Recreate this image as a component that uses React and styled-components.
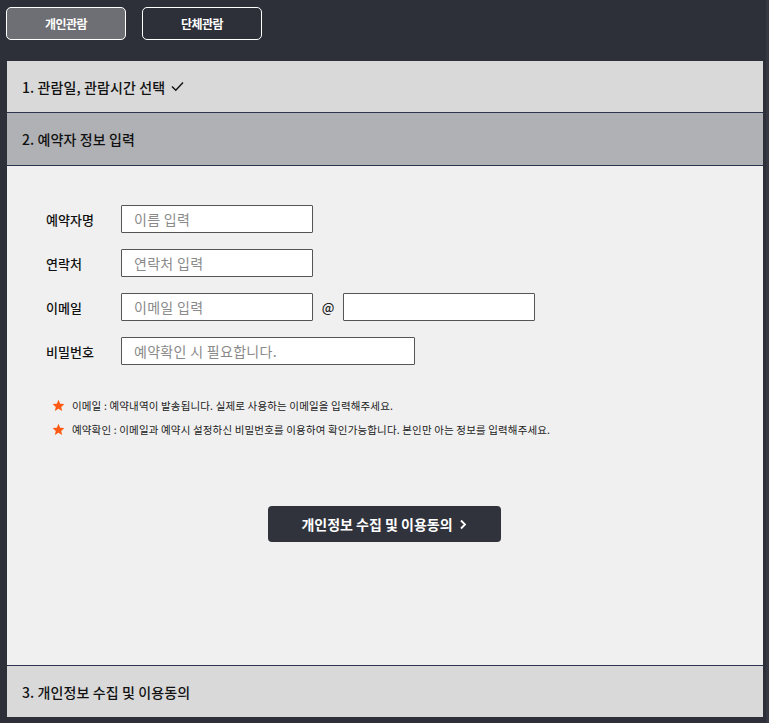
import React from 'react';
import styled, { createGlobalStyle } from 'styled-components';

const GlobalStyle = createGlobalStyle`
  html, body {
    margin: 0;
    padding: 0;
    background: #2e3039;
    font-family: "Noto Sans CJK KR", "Noto Sans", sans-serif;
  }
  * { box-sizing: border-box; }
`;

const Page = styled.div`
  width: 769px;
  height: 723px;
  display: flex;
  overflow: hidden;
`;

const Main = styled.div`
  flex: 1;
  display: flex;
  flex-direction: column;
  padding: 0 3px 6px 7px;
`;

const ScrollTrack = styled.div`
  width: 3px;
  background: #363944;
`;

const TabBar = styled.div`
  display: flex;
  gap: 16px;
  padding: 7px 0 21px 0;
  margin-left: -1px;
`;

const TabButton = styled.button`
  width: 120px;
  height: 33px;
  border: 1px solid #ffffff;
  border-radius: 5px;
  background: ${(p) => (p.$active ? '#6e6f74' : 'transparent')};
  color: #fff;
  font-family: inherit;
  font-size: 12px;
  font-weight: 700;
  letter-spacing: -0.5px;
  cursor: pointer;
`;

const Panel = styled.div`
  flex: 1;
  display: flex;
  flex-direction: column;
`;

const StepHeader = styled.div`
  height: ${(p) => p.$h || 52}px;
  background: ${(p) => p.$bg};
  border-top: ${(p) => (p.$top ? '1px solid #2b3552' : 'none')};
  border-bottom: ${(p) => (p.$bottom ? '1px solid #2b3552' : 'none')};
  display: flex;
  align-items: center;
  padding-left: 15px;
  font-size: 14px;
  font-weight: 500;
  color: #111;
  letter-spacing: 0.1px;
  gap: 6px;
`;

const Body = styled.div`
  flex: 1;
  background: #f0f0f0;
  padding: 39px 0 0 39px;
  display: flex;
  flex-direction: column;
`;

const Form = styled.div`
  display: flex;
  flex-direction: column;
  gap: 16px;
`;

const Row = styled.div`
  display: flex;
  align-items: center;
  height: 28px;
`;

const Label = styled.div`
  width: 75px;
  font-size: 13px;
  font-weight: 500;
  color: #111;
`;

const Input = styled.input`
  width: ${(p) => p.$w || 192}px;
  height: ${(p) => p.$h || 28}px;
  border: 1px solid #555;
  border-radius: 1px;
  background: #fff;
  padding: 0 12px;
  font-family: inherit;
  font-size: 14px;
  color: #333;
  outline: none;
  &::placeholder {
    color: #8a8a8a;
    letter-spacing: 0.3px;
  }
`;

const At = styled.span`
  width: 30px;
  text-align: center;
  font-size: 13px;
  font-weight: 500;
  color: #222;
`;

const Notes = styled.ul`
  list-style: none;
  margin: 33px 0 0 6px;
  padding: 0;
  display: flex;
  flex-direction: column;
  gap: 9px;
`;

const Note = styled.li`
  display: flex;
  align-items: center;
  gap: 7px;
  font-size: 10.5px;
  color: #222;
  letter-spacing: 0.15px;
  line-height: 15px;
`;

const Star = () => (
  <svg width="13" height="13" viewBox="0 0 24 24">
    <path
      d="M12 1.5l3.1 7.2 7.8.7-5.9 5.2 1.8 7.7L12 18.2l-6.8 4.1 1.8-7.7-5.9-5.2 7.8-.7z"
      fill="#ff5a14"
    />
  </svg>
);

const ButtonWrap = styled.div`
  display: flex;
  justify-content: center;
  margin-top: 69px;
  padding-right: 41px;
`;

const AgreeButton = styled.button`
  width: 233px;
  height: 36px;
  border: none;
  border-radius: 4px;
  background: #30333c;
  color: #fff;
  font-family: inherit;
  font-size: 14px;
  font-weight: 700;
  display: flex;
  align-items: center;
  justify-content: center;
  gap: 6px;
  cursor: pointer;
`;

export default function App() {
  return (
    <Page>
      <GlobalStyle />
      <Main>
        <TabBar>
          <TabButton $active>개인관람</TabButton>
          <TabButton>단체관람</TabButton>
        </TabBar>
        <Panel>
          <StepHeader $bg="#d9d9d9" $h={52} $bottom>
            1. 관람일, 관람시간 선택
            <svg width="13" height="11" viewBox="0 0 13 11">
              <path d="M1 5.5l3.8 3.8L12 1.5" fill="none" stroke="#111" strokeWidth="1.4" />
            </svg>
          </StepHeader>
          <StepHeader $bg="#b0b1b5" $h={53} $bottom>
            2. 예약자 정보 입력
          </StepHeader>
          <Body>
            <Form>
              <Row>
                <Label>예약자명</Label>
                <Input placeholder="이름 입력" />
              </Row>
              <Row>
                <Label>연락처</Label>
                <Input placeholder="연락처 입력" />
              </Row>
              <Row>
                <Label>이메일</Label>
                <Input placeholder="이메일 입력" />
                <At>@</At>
                <Input />
              </Row>
              <Row>
                <Label>비밀번호</Label>
                <Input type="password" $w={294} placeholder="예약확인 시 필요합니다." />
              </Row>
            </Form>
            <Notes>
              <Note>
                <Star />
                이메일 : 예약내역이 발송됩니다. 실제로 사용하는 이메일을 입력해주세요.
              </Note>
              <Note>
                <Star />
                예약확인 : 이메일과 예약시 설정하신 비밀번호를 이용하여 확인가능합니다. 본인만 아는 정보를 입력해주세요.
              </Note>
            </Notes>
            <ButtonWrap>
              <AgreeButton>
                개인정보 수집 및 이용동의
                <svg width="8" height="11" viewBox="0 0 8 11">
                  <path d="M2 1.5l4 4-4 4" fill="none" stroke="#fff" strokeWidth="1.8" />
                </svg>
              </AgreeButton>
            </ButtonWrap>
          </Body>
          <StepHeader $bg="#d9d9d9" $h={52} $top>
            3. 개인정보 수집 및 이용동의
          </StepHeader>
        </Panel>
      </Main>
      <ScrollTrack />
    </Page>
  );
}
